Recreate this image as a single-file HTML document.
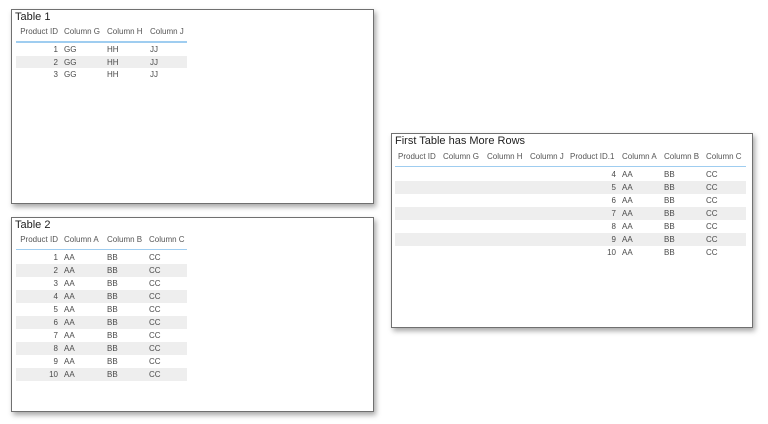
<!DOCTYPE html>
<html><head><meta charset="utf-8"><style>
body{margin:0;width:768px;height:424px;background:#fff;position:relative;overflow:hidden;font-family:"Liberation Sans",sans-serif}
.box{position:absolute;background:#fff;border:1px solid #707070;box-shadow:2px 3px 5px rgba(0,0,0,.35);box-sizing:border-box}
.t{position:absolute;font-size:11px;color:#222;white-space:nowrap}
.h,.c{position:absolute;font-size:8px;white-space:nowrap}
.h{color:#555}
.c{color:#4a4a4a}
.r{position:absolute;background:#eeeeee}
.ln{position:absolute;height:1.5px;background:#9fcdf0}
.ra{text-align:right}
</style></head><body>

<!-- Table 1 -->
<div class="box" style="left:11px;top:9px;width:363px;height:195px"></div>
<div class="t" style="left:15px;top:11px">Table 1</div>
<div class="h ra" style="left:10px;width:48px;top:27px">Product ID</div>
<div class="h" style="left:64px;top:27px">Column G</div>
<div class="h" style="left:107px;top:27px">Column H</div>
<div class="h" style="left:150px;top:27px">Column J</div>
<div class="ln" style="left:16px;width:171px;top:41px"></div>
<div class="r" style="left:16px;width:171px;top:55.5px;height:12.5px"></div>
<div class="c ra" style="left:20px;width:38px;top:45px">1</div><div class="c" style="left:64px;top:45px">GG</div><div class="c" style="left:107px;top:45px">HH</div><div class="c" style="left:150px;top:45px">JJ</div>
<div class="c ra" style="left:20px;width:38px;top:57.5px">2</div><div class="c" style="left:64px;top:57.5px">GG</div><div class="c" style="left:107px;top:57.5px">HH</div><div class="c" style="left:150px;top:57.5px">JJ</div>
<div class="c ra" style="left:20px;width:38px;top:70px">3</div><div class="c" style="left:64px;top:70px">GG</div><div class="c" style="left:107px;top:70px">HH</div><div class="c" style="left:150px;top:70px">JJ</div>

<!-- Table 2 -->
<div class="box" style="left:11px;top:217px;width:363px;height:195px"></div>
<div class="t" style="left:15px;top:219px">Table 2</div>
<div class="h ra" style="left:10px;width:48px;top:235px">Product ID</div>
<div class="h" style="left:64px;top:235px">Column A</div>
<div class="h" style="left:107px;top:235px">Column B</div>
<div class="h" style="left:149px;top:235px">Column C</div>
<div class="ln" style="left:16px;width:171px;top:248.5px"></div>
<div class="r" style="left:16px;width:171px;top:263.5px;height:13px"></div>
<div class="r" style="left:16px;width:171px;top:289.5px;height:13px"></div>
<div class="r" style="left:16px;width:171px;top:315.5px;height:13px"></div>
<div class="r" style="left:16px;width:171px;top:341.5px;height:13px"></div>
<div class="r" style="left:16px;width:171px;top:367.5px;height:13px"></div>
<div class="c ra" style="left:20px;width:38px;top:253px">1</div><div class="c" style="left:64px;top:253px">AA</div><div class="c" style="left:107px;top:253px">BB</div><div class="c" style="left:149px;top:253px">CC</div>
<div class="c ra" style="left:20px;width:38px;top:266px">2</div><div class="c" style="left:64px;top:266px">AA</div><div class="c" style="left:107px;top:266px">BB</div><div class="c" style="left:149px;top:266px">CC</div>
<div class="c ra" style="left:20px;width:38px;top:279px">3</div><div class="c" style="left:64px;top:279px">AA</div><div class="c" style="left:107px;top:279px">BB</div><div class="c" style="left:149px;top:279px">CC</div>
<div class="c ra" style="left:20px;width:38px;top:292px">4</div><div class="c" style="left:64px;top:292px">AA</div><div class="c" style="left:107px;top:292px">BB</div><div class="c" style="left:149px;top:292px">CC</div>
<div class="c ra" style="left:20px;width:38px;top:305px">5</div><div class="c" style="left:64px;top:305px">AA</div><div class="c" style="left:107px;top:305px">BB</div><div class="c" style="left:149px;top:305px">CC</div>
<div class="c ra" style="left:20px;width:38px;top:318px">6</div><div class="c" style="left:64px;top:318px">AA</div><div class="c" style="left:107px;top:318px">BB</div><div class="c" style="left:149px;top:318px">CC</div>
<div class="c ra" style="left:20px;width:38px;top:331px">7</div><div class="c" style="left:64px;top:331px">AA</div><div class="c" style="left:107px;top:331px">BB</div><div class="c" style="left:149px;top:331px">CC</div>
<div class="c ra" style="left:20px;width:38px;top:344px">8</div><div class="c" style="left:64px;top:344px">AA</div><div class="c" style="left:107px;top:344px">BB</div><div class="c" style="left:149px;top:344px">CC</div>
<div class="c ra" style="left:20px;width:38px;top:357px">9</div><div class="c" style="left:64px;top:357px">AA</div><div class="c" style="left:107px;top:357px">BB</div><div class="c" style="left:149px;top:357px">CC</div>
<div class="c ra" style="left:20px;width:38px;top:370px">10</div><div class="c" style="left:64px;top:370px">AA</div><div class="c" style="left:107px;top:370px">BB</div><div class="c" style="left:149px;top:370px">CC</div>

<!-- Merged -->
<div class="box" style="left:391px;top:133px;width:362px;height:195px"></div>
<div class="t" style="left:395px;top:135px">First Table has More Rows</div>
<div class="h" style="left:398px;top:152px">Product ID</div>
<div class="h" style="left:443px;top:152px">Column G</div>
<div class="h" style="left:487px;top:152px">Column H</div>
<div class="h" style="left:530px;top:152px">Column J</div>
<div class="h" style="left:570px;top:152px">Product ID.1</div>
<div class="h" style="left:622px;top:152px">Column A</div>
<div class="h" style="left:664px;top:152px">Column B</div>
<div class="h" style="left:706px;top:152px">Column C</div>
<div class="ln" style="left:395px;width:351px;top:165.5px"></div>
<div class="r" style="left:395px;width:351px;top:180.5px;height:13px"></div>
<div class="r" style="left:395px;width:351px;top:206.5px;height:13px"></div>
<div class="r" style="left:395px;width:351px;top:232.5px;height:13px"></div>
<div class="c ra" style="left:580px;width:36px;top:170px">4</div><div class="c" style="left:622px;top:170px">AA</div><div class="c" style="left:664px;top:170px">BB</div><div class="c" style="left:706px;top:170px">CC</div>
<div class="c ra" style="left:580px;width:36px;top:183px">5</div><div class="c" style="left:622px;top:183px">AA</div><div class="c" style="left:664px;top:183px">BB</div><div class="c" style="left:706px;top:183px">CC</div>
<div class="c ra" style="left:580px;width:36px;top:196px">6</div><div class="c" style="left:622px;top:196px">AA</div><div class="c" style="left:664px;top:196px">BB</div><div class="c" style="left:706px;top:196px">CC</div>
<div class="c ra" style="left:580px;width:36px;top:209px">7</div><div class="c" style="left:622px;top:209px">AA</div><div class="c" style="left:664px;top:209px">BB</div><div class="c" style="left:706px;top:209px">CC</div>
<div class="c ra" style="left:580px;width:36px;top:222px">8</div><div class="c" style="left:622px;top:222px">AA</div><div class="c" style="left:664px;top:222px">BB</div><div class="c" style="left:706px;top:222px">CC</div>
<div class="c ra" style="left:580px;width:36px;top:235px">9</div><div class="c" style="left:622px;top:235px">AA</div><div class="c" style="left:664px;top:235px">BB</div><div class="c" style="left:706px;top:235px">CC</div>
<div class="c ra" style="left:580px;width:36px;top:248px">10</div><div class="c" style="left:622px;top:248px">AA</div><div class="c" style="left:664px;top:248px">BB</div><div class="c" style="left:706px;top:248px">CC</div>

</body></html>
